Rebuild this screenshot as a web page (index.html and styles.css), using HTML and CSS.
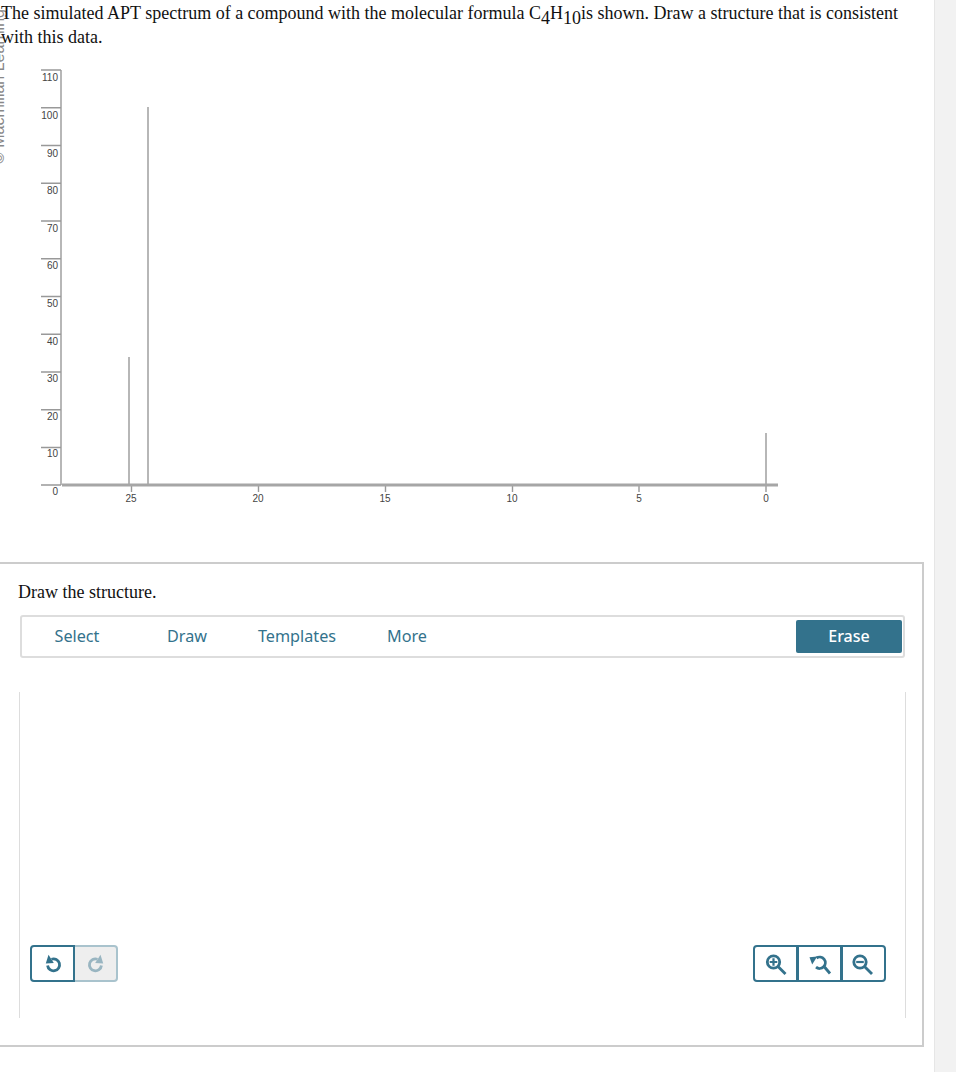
FILE: index.html
```html
<!DOCTYPE HTML><html>
<head>
  <title>Draw the structure</title>
  <meta name="viewport" content="width=device-width, initial-scale=1">
  <link rel="stylesheet" href="styles.css">
</head>
<body>
  <div class="page">
    <div class="main">
      <div class="credit">© Macmillan Learning</div>
      <p class="question">The simulated APT spectrum of a compound with the molecular formula C<sub>4</sub>H<sub>10</sub>is shown. Draw a structure that is consistent with this data.</p>
      <svg class="spectrum" width="800" height="500" viewBox="0 60 800 500">
        <g class="axis">
          <path d="M61 70V485"/>
          <path d="M41 70H61M41 107.7H61M41 145.5H61M41 183.2H61M41 221H61M41 258.7H61M41 296.5H61M41 334.2H61M41 372H61M41 409.7H61M41 447.5H61M41 485H61"/>
          <path d="M131.5 486V492M258.5 486V492M385.5 486V492M512.5 486V492M639 486V492M766 486V492"/>
          <path d="M129 357V484M148 107V484M766 433V484"/>
          <path class="baseline" d="M62 485H778"/>
        </g>
        <g class="ylabels">
          <text x="58" y="81">110</text>
          <text x="58" y="119">100</text>
          <text x="58" y="157">90</text>
          <text x="58" y="194">80</text>
          <text x="58" y="232">70</text>
          <text x="58" y="269">60</text>
          <text x="58" y="307">50</text>
          <text x="58" y="345">40</text>
          <text x="58" y="382">30</text>
          <text x="58" y="420">20</text>
          <text x="58" y="457">10</text>
          <text x="58" y="495">0</text>
        </g>
        <g class="xlabels">
          <text x="131" y="502">25</text>
          <text x="258" y="502">20</text>
          <text x="385" y="502">15</text>
          <text x="512" y="502">10</text>
          <text x="639" y="502">5</text>
          <text x="766" y="502">0</text>
        </g>
      </svg>
      <div class="panel">
        <p class="prompt">Draw the structure.</p>
        <div class="toolbar">
          <div class="menu">
            <span class="menu-item">Select</span>
            <span class="menu-item">Draw</span>
            <span class="menu-item">Templates</span>
            <span class="menu-item">More</span>
          </div>
          <button class="erase">Erase</button>
        </div>
        <div class="canvas">
          <div class="btn-group">
            <button class="tool">
              <svg class="icon" width="20" height="20" viewBox="0 0 20 20"><path class="ring" d="M8.5 5.2A6 6 0 1 1 4.6 11.5"/><path class="solid" d="M5.5 0.8L2.8 9.6L10.8 9Z"/></svg>
            </button>
            <button class="tool off">
              <svg class="icon" width="20" height="20" viewBox="0 0 20 20"><path class="ring" d="M11.5 5.2A6 6 0 1 0 15.4 11.5"/><path class="solid" d="M14.5 0.8L17.2 9.6L9.2 9Z"/></svg>
            </button>
          </div>
          <div class="btn-group">
            <button class="tool">
              <svg class="icon" width="24" height="24" viewBox="0 0 24 24"><circle class="ring" cx="9.5" cy="10" r="6.2"/><path class="ring" d="M14 14.5L21.5 22"/><path class="thin" d="M9.5 6.2V13.8M5.7 10H13.3"/></svg>
            </button>
            <button class="tool">
              <svg class="icon" width="24" height="24" viewBox="0 0 24 24"><path class="ring" d="M8.5 6A5.7 5.7 0 1 1 8 15.2"/><path class="ring" d="M16.5 15L22 21.5"/><path class="solid" d="M1.5 5.2L9.2 4.4L4.2 12.6Z"/></svg>
            </button>
            <button class="tool">
              <svg class="icon" width="24" height="24" viewBox="0 0 24 24"><circle class="ring" cx="8" cy="10" r="6.2"/><path class="ring" d="M12.5 14.5L20 22"/><path class="thin" d="M4.2 10H11.8"/></svg>
            </button>
          </div>
        </div>
      </div>
    </div>
    <div class="sidebar"></div>
  </div>
</body>
</html>
```

FILE: styles.css
```css
html {
  font-family: "Liberation Serif", serif;
}
body {
  margin: 0;
  background-color: #fff;
}
.page {
  display: grid;
  grid-template-columns: 934px 1fr;
  height: 1072px;
  overflow: hidden;
}
.main {
  position: relative;
  min-width: 0;
}
.sidebar {
  background-color: #f2f2f2;
  border-left: 1px solid #e6e6e6;
}
.credit {
  position: absolute;
  left: -8px;
  top: 164px;
  transform: rotate(-90deg);
  transform-origin: 0 0;
  font-family: "Liberation Sans", sans-serif;
  font-size: 16px;
  line-height: 14px;
  white-space: nowrap;
  color: #888;
}
.question {
  position: relative;
  box-sizing: border-box;
  margin: 0;
  padding: 1px 0 0 1px;
  width: 905px;
  height: 60px;
  font-size: 18px;
  line-height: 24px;
  color: #111;
}
.question sub {
  font-size: 18px;
  line-height: 0;
  vertical-align: -5px;
}
.spectrum {
  display: block;
  margin-bottom: 2px;
}
.axis path {
  fill: none;
  stroke: #999;
  stroke-width: 1.4;
}
.axis .baseline {
  stroke: #a6a6a6;
  stroke-width: 3;
}
.ylabels text, .xlabels text {
  font-family: "Liberation Sans", sans-serif;
  font-size: 10px;
  fill: #444;
}
.ylabels text {
  text-anchor: end;
}
.xlabels text {
  text-anchor: middle;
}
.panel {
  box-sizing: border-box;
  width: 924px;
  height: 485px;
  border: 2px solid #ccc;
  border-left: none;
  padding: 16px 0 0 18px;
  display: flex;
  flex-direction: column;
}
.prompt {
  margin: 0;
  font-size: 18px;
  line-height: 24px;
  color: #111;
}
.toolbar {
  margin: 11px 0 0 2px;
  box-sizing: border-box;
  width: 885px;
  height: 43px;
  border: 2px solid #ddd;
  border-radius: 3px;
  display: flex;
  justify-content: space-between;
  align-items: center;
  padding: 0 1px 1px 0;
}
.menu {
  display: flex;
  font-family: "Noto Sans", sans-serif;
  font-size: 16.2px;
  color: #33728c;
}
.menu-item {
  width: 110px;
  text-align: center;
}
.erase {
  width: 106px;
  height: 33px;
  border: none;
  border-radius: 2px;
  background-color: #33728c;
  color: #fff;
  font-family: "Noto Sans", sans-serif;
  font-size: 16px;
  font-weight: 500;
  padding: 0;
}
.canvas {
  margin: 34px 0 0 1px;
  box-sizing: border-box;
  width: 887px;
  height: 326px;
  border-left: 1px solid #ddd;
  border-right: 1px solid #ddd;
  display: flex;
  justify-content: space-between;
  align-items: flex-end;
  padding: 0 19px 36px 10px;
}
.btn-group {
  display: flex;
  height: 37px;
}
.tool {
  box-sizing: border-box;
  width: 45px;
  padding: 0;
  margin-left: -1px;
  border: 2px solid #33728c;
  background-color: #fff;
  display: flex;
  align-items: center;
  justify-content: center;
}
.tool:first-child {
  margin-left: 0;
  border-radius: 4px 0 0 4px;
}
.tool:last-child {
  border-radius: 0 4px 4px 0;
}
.tool.off {
  width: 43px;
  margin-left: 0;
  border-color: #a9c3cd;
  border-left: none;
  background-color: #eee;
}
.tool.off .icon {
  opacity: 0.45;
}
.icon .ring {
  fill: none;
  stroke: #33728c;
  stroke-width: 2.8;
}
.icon .thin {
  fill: none;
  stroke: #33728c;
  stroke-width: 2.2;
}
.icon .solid {
  fill: #33728c;
}
```
